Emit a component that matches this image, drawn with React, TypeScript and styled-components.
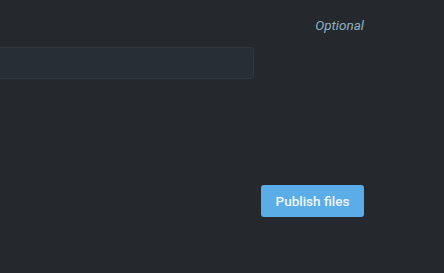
import React from "react";
import styled, { createGlobalStyle } from "styled-components";

const Global = createGlobalStyle`
  html, body { margin: 0; padding: 0; background: #25292d; }
  body { font-family: Roboto, "Liberation Sans", sans-serif; }
`;

const Page = styled.div`
  width: 444px;
  height: 273px;
  box-sizing: border-box;
  padding: 17px 80px 0 0;
  display: flex;
  flex-direction: column;
`;

const LabelRow = styled.div`
  display: flex;
  justify-content: flex-end;
  height: 16px;
`;

const Hint = styled.span`
  font-size: 13.5px;
  font-style: italic;
  color: #8eb1c2;
  line-height: 17px;
`;

const Input = styled.input`
  margin-top: 14px;
  width: 254px;
  height: 32px;
  box-sizing: border-box;
  background: #282e35;
  border: 1px solid #30363d;
  border-left: none;
  border-radius: 0 3px 3px 0;
  outline: none;
  color: #ccc;
  padding: 0 8px;
`;

const Actions = styled.div`
  margin-top: 106px;
  display: flex;
  justify-content: flex-end;
`;

const Button = styled.button`
  height: 32px;
  width: 103px;
  border: none;
  border-radius: 3px;
  background: #5aade6;
  color: #f0f6fb;
  font-family: Roboto, "Liberation Sans", sans-serif;
  font-weight: 500;
  font-size: 13.5px;
  padding: 0;
  cursor: pointer;
`;

export default function App() {
  return (
    <>
      <Global />
      <Page>
        <LabelRow>
          <Hint>Optional</Hint>
        </LabelRow>
        <Input type="text" />
        <Actions>
          <Button>Publish files</Button>
        </Actions>
      </Page>
    </>
  );
}
